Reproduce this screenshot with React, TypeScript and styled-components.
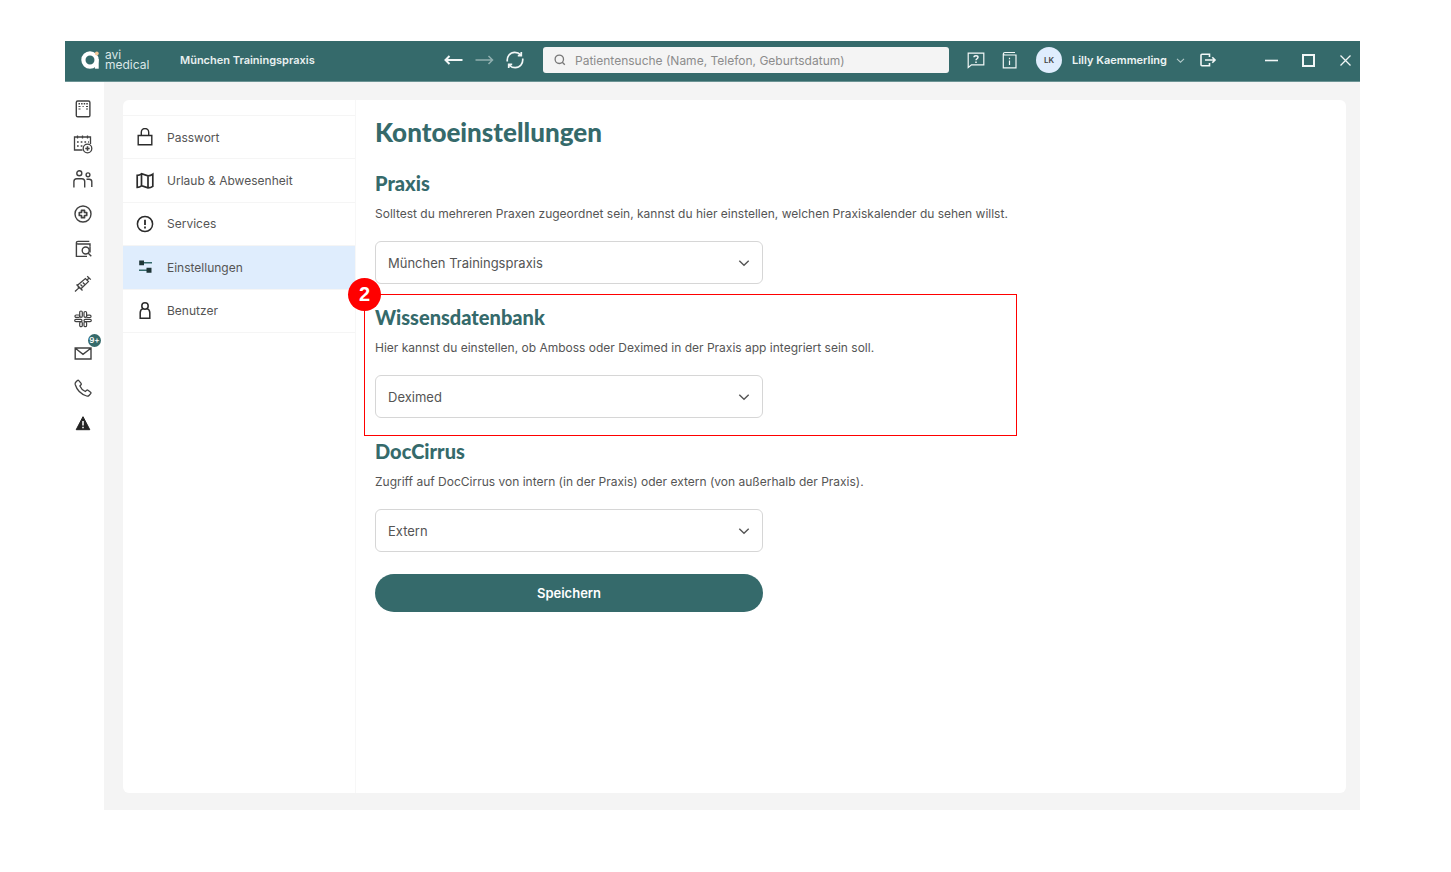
import React, { useState } from 'react';
import styled, { createGlobalStyle } from 'styled-components';

const teal = '#356a6b';
const ink = '#414141';

const GlobalStyle = createGlobalStyle`
  * { box-sizing: border-box; }
  body {
    margin: 0;
    background: #fff;
    color: #555;
    font-family: Inter, 'Liberation Sans', sans-serif;
    font-size: 12px;
  }
  button, input, select { font: inherit; color: inherit; }
  h1, h2, p, ul { margin: 0; padding: 0; }
  ul { list-style: none; }
  svg { display: block; flex: none; fill: none; stroke: currentColor; }
`;

const Page = styled.div`
  padding: 41px 91px 62px 65px;
`;

const AppWindow = styled.div`
  display: flex;
  flex-direction: column;
  min-height: calc(100vh - 103px);
`;

const TopBar = styled.header`
  display: flex;
  align-items: center;
  height: 41px;
  padding-bottom: 2px;
  background: ${teal};
  border-bottom: 1px solid #6b9394;
  color: #fff;
`;

const BrandArea = styled.div`
  display: flex;
  align-items: center;
  width: 379px;
  padding-left: 16px;
  flex: none;
`;

const Brand = styled.a`
  display: flex;
  align-items: center;
  gap: 5px;
  width: 99px;
  color: #dbe7e7;
  text-decoration: none;
`;

const BrandName = styled.span`
  font-size: 12px;
  line-height: 10px;
`;

const PracticeName = styled.strong`
  font-size: 11px;
  font-weight: 600;
  white-space: nowrap;
  color: #e8f0f0;
`;

const IconButton = styled.button<{ $dim?: boolean }>`
  display: flex;
  padding: 0;
  border: 0;
  background: none;
  color: ${(p) => (p.$dim ? '#91b0b0' : '#f2f7f7')};
  cursor: pointer;
`;

const History = styled.div`
  display: flex;
  align-items: center;
  gap: 12px;
  width: 99px;
  flex: none;
`;

const Search = styled.label`
  display: flex;
  align-items: center;
  flex: 1;
  min-width: 160px;
  height: 26px;
  padding: 0 11px;
  gap: 9px;
  border-radius: 3px;
  background: #f4f4f4;
  color: #777;
`;

const SearchInput = styled.input`
  flex: 1;
  min-width: 0;
  padding: 0;
  border: 0;
  outline: 0;
  background: none;
  &::placeholder { color: #8c8c8c; opacity: 1; }
`;

const Tools = styled.div`
  display: flex;
  align-items: center;
  width: 411px;
  padding: 0 8px 0 18px;
  flex: none;
`;

const ToolPair = styled.div`
  display: flex;
  align-items: center;
  gap: 17px;
  width: 69px;
`;

const UserButton = styled.button`
  display: flex;
  align-items: center;
  width: 164px;
  padding: 0;
  border: 0;
  background: none;
  font-size: 11px;
  font-weight: 600;
  white-space: nowrap;
  color: #edf4f4;
  cursor: pointer;
  svg { margin-left: 9px; color: #b4cbcb; }
`;

const Avatar = styled.span`
  display: grid;
  place-items: center;
  width: 26px;
  height: 26px;
  margin-right: 10px;
  border-radius: 50%;
  background: #dfedfd;
  color: #444;
  font-size: 8px;
`;

const WindowControls = styled.div`
  display: flex;
  align-items: center;
  gap: 24px;
  margin-left: auto;
`;

const Body = styled.div`
  display: flex;
  flex: 1;
`;

const Rail = styled.nav`
  display: flex;
  flex-direction: column;
  align-items: center;
  gap: 15px;
  width: 39px;
  padding: 17px 3px 0 0;
  flex: none;
`;

const RailButton = styled.button`
  position: relative;
  display: grid;
  place-items: center;
  width: 20px;
  height: 20px;
  padding: 0;
  border: 0;
  background: none;
  color: ${ink};
  cursor: pointer;
`;

const Count = styled.span`
  position: absolute;
  top: -10px;
  right: -8px;
  width: 13px;
  height: 13px;
  border-radius: 50%;
  background: ${teal};
  color: #fff;
  font-size: 8px;
  font-weight: 600;
  line-height: 13px;
  text-align: center;
`;

const Workspace = styled.div`
  display: flex;
  flex: 1;
  min-width: 0;
  padding: 18px 14px 17px 19px;
  background: #f4f4f4;
`;

const Card = styled.div`
  display: flex;
  flex: 1;
  min-width: 0;
  border-radius: 6px;
  background: #fff;
`;

const SideMenu = styled.nav`
  width: 233px;
  padding-top: 15px;
  border-right: 1px solid #f7f7f7;
  flex: none;
`;

const MenuList = styled.ul`
  display: grid;
  grid-template-rows: repeat(5, 1fr);
  height: 218px;
  border-top: 1px solid #f5f5f5;
`;

const MenuLink = styled.a<{ $active?: boolean }>`
  display: flex;
  align-items: center;
  gap: 13px;
  height: 100%;
  padding-left: 13px;
  border-bottom: 1px solid #f5f5f5;
  background: ${(p) => (p.$active ? '#dfedfd' : 'transparent')};
  font-size: 12px;
  color: #555;
  text-decoration: none;
  svg { color: #2b2b2b; }
`;

const Main = styled.main`
  flex: 1;
  min-width: 0;
  padding: 17px 19px 24px;
`;

const Title = styled.h1`
  margin-bottom: 25px;
  font-family: Lato, sans-serif;
  font-size: 26px;
  font-weight: 900;
  line-height: 30px;
  color: ${teal};
`;

const Section = styled.section`
  position: relative;
  max-width: 642px;
  margin-bottom: 22px;
`;

const SectionTitle = styled.h2`
  margin-bottom: 11px;
  font-family: Lato, sans-serif;
  font-size: 20px;
  font-weight: 900;
  line-height: 22px;
  color: ${teal};
`;

const Hint = styled.p`
  margin-bottom: 18px;
  font-size: 12px;
  line-height: 18px;
`;

const SelectWrap = styled.div`
  display: grid;
  align-items: center;
  max-width: 388px;
  > * { grid-area: 1 / 1; }
  svg { justify-self: end; margin-right: 13px; pointer-events: none; }
`;

const Select = styled.select`
  appearance: none;
  width: 100%;
  height: 43px;
  padding: 0 36px 0 12px;
  border: 1px solid #d6d6d6;
  border-radius: 6px;
  background: #fff;
  font-size: 13px;
`;

const SaveButton = styled.button`
  display: block;
  width: 100%;
  max-width: 388px;
  height: 38px;
  border: 0;
  border-radius: 19px;
  background: ${teal};
  color: #fff;
  font-size: 13px;
  font-weight: 600;
  cursor: pointer;
`;

const Highlight = styled.div`
  position: absolute;
  top: -12px;
  right: 0;
  bottom: -18px;
  left: -11px;
  border: 1px solid #f00;
  pointer-events: none;
`;

const StepBadge = styled.span`
  position: absolute;
  top: -17px;
  left: -17px;
  width: 33px;
  height: 33px;
  border-radius: 50%;
  background: #f00;
  color: #fff;
  font-family: 'Liberation Sans', sans-serif;
  font-size: 20px;
  font-weight: 700;
  line-height: 33px;
  text-align: center;
`;

const Chevron = ({ size = 12 }: { size?: number }) => (
  <svg width={size} height={size} viewBox="0 0 12 12" strokeWidth="1.4">
    <path d="M1.3 3.8 6 8.3l4.7-4.5" />
  </svg>
);

const railItems = [
  { label: 'Kalender', icon: (
    <svg width="20" height="20" viewBox="0 0 20 20" strokeWidth="1.4">
      <rect x="3.300" y="2" width="13.600" height="15.800" rx="1.400" />
      <path d="M5.500 4.800h9.500" strokeDasharray="1.500 1.100" />
      <path d="M5.500 7.500h2M9.500 7.500h1.200M13 7.500h2M5.500 10h2M13 10h2" strokeWidth="1.200" />
    </svg>) },
  { label: 'Termin anlegen', icon: (
    <svg width="20" height="20" viewBox="0 0 20 20" strokeWidth="1.3">
      <path d="M9.500 16h-8V3h16v7" />
      <path d="M4.500 1.500v3M9.500 1.500v3M14.500 1.500v3" />
      <path d="M4 8h12M4 12h6" strokeDasharray="1.700 2" />
      <circle cx="14.500" cy="14.500" r="4.300" fill="#fff" />
      <path d="M14.500 12.300v4.400M12.300 14.500h4.400" strokeWidth="1.600" />
    </svg>) },
  { label: 'Patienten', icon: (
    <svg width="20" height="20" viewBox="0 0 20 20" strokeWidth="1.400">
      <circle cx="6.300" cy="4.200" r="2.500" />
      <path d="M.9 18.500v-6c0-1.800 1-2.800 2.800-2.800h5.200c1.800 0 2.800 1 2.800 2.800v6" />
      <circle cx="15" cy="5.800" r="1.900" />
      <path d="M13.500 10.200h2.600c1.800 0 2.700 1 2.700 2.600v5.200" />
    </svg>) },
  { label: 'Behandlung', icon: (
    <svg width="20" height="20" viewBox="0 0 20 20" strokeWidth="1.400">
      <circle cx="10" cy="10" r="8" />
      <path d="M8.500 6.300h3v2.200h2.200v3h-2.200v2.200h-3v-2.200H6.300v-3h2.200z" strokeWidth="1.700" strokeLinejoin="round" />
    </svg>) },
  { label: 'Akten durchsuchen', icon: (
    <svg width="20" height="20" viewBox="0 0 20 20" strokeWidth="1.400">
      <path d="M16.300 2.400H5c-2.200 0-2.200 2.600 0 2.600h12v2.500M3.400 3.700v13.700H14" />
      <circle cx="12.700" cy="11.500" r="3.500" />
      <path d="m15 14 3.300 3.300M17 13.500V7.500" />
    </svg>) },
  { label: 'Impfungen', icon: (
    <svg width="20" height="20" viewBox="0 0 20 20" strokeWidth="1.300">
      <path d="m2 17.500 3.600-3.400M3.500 10.500l6 6M5.500 13.800 4.800 11l7.600-6.400 3 3-7.200 6.900-2.700-.7ZM13.800 6.200l2.600-2.400M14.200 2.200l3.600 3.400M7.500 10.500l1.800 1.800M9.800 8.500l1.800 1.800" />
    </svg>) },
  { label: 'Slack', icon: (
    <svg width="20" height="20" viewBox="0 0 20 20" strokeWidth="1.200">
      <rect x="6.700" y="2" width="2.600" height="6.300" rx="1.300" />
      <rect x="2" y="6" width="4.700" height="2.300" rx="1.100" />
      <rect x="11" y="2.500" width="2.600" height="5.800" rx="1.300" />
      <rect x="13.600" y="6.200" width="4.400" height="2.300" rx="1.100" />
      <rect x="1.700" y="10.300" width="7.300" height="2.400" rx="1.200" />
      <rect x="11" y="10.300" width="7.300" height="2.400" rx="1.200" />
      <rect x="6.700" y="12.700" width="2.600" height="5" rx="1.300" />
      <rect x="11" y="12.700" width="2.600" height="5" rx="1.300" />
    </svg>) },
  { label: 'Nachrichten', count: '9+', icon: (
    <svg width="20" height="20" viewBox="0 0 20 20" strokeWidth="1.400">
      <path d="M2.200 4h15.800v11H2.200zM2.400 4.300 10 10.300l7.800-6" />
    </svg>) },
  { label: 'Telefon', icon: (
    <svg width="20" height="20" viewBox="0 0 20 20" strokeWidth="1.300">
      <path d="M2.700 3.300 4.400 1.600c.5-.4 1-.4 1.400 0l2.300 2.800c.4.5.3 1-.1 1.400L6.900 7c1 2.400 2.900 4.400 5.400 5.500l1.300-1.200c.4-.4.9-.4 1.400-.1l2.600 2c.5.4.5 1 .1 1.400L16 16.500c-.6.7-1.500.8-2.300.5C8 15.200 3.900 11 2.200 5.500c-.2-.8-.1-1.600.5-2.200Z" />
    </svg>) },
  { label: 'Warnungen', icon: (
    <svg width="20" height="20" viewBox="0 0 20 20" strokeWidth="1">
      <path d="M10 2.700 16.800 15.700H3.200z" fill="#222" stroke="#222" strokeLinejoin="round" />
      <path d="M10 7v4.600M10 12.800v1.500" stroke="#fff" strokeWidth="1.500" />
    </svg>) },
];

const menuItems = [
  { label: 'Passwort', icon: (
    <svg width="18" height="18" viewBox="0 0 18 18" strokeWidth="1.400">
      <path d="M2.200 7.500h13.600v9.300H2.200zM5.300 7.500V4.200a3.700 3.700 0 0 1 7.400 0v3.300" />
    </svg>) },
  { label: 'Urlaub & Abwesenheit', icon: (
    <svg width="18" height="18" viewBox="0 0 18 18" strokeWidth="1.700">
      <path d="M1.200 3.300c1.500 0 3-.5 4.300-1.500l6.500 2c1.500 0 3.300-.4 4.800-1.500v12c-1.500 1.200-3.300 1.600-4.800 1.600l-6.500-2.100c-1.300 1-2.800 1.500-4.300 1.500zM5.500 2v12M12 4v12" />
    </svg>) },
  { label: 'Services', icon: (
    <svg width="18" height="18" viewBox="0 0 18 18" strokeWidth="1.500">
      <circle cx="9" cy="9" r="7.600" />
      <path d="M9 4.800v5.200M9 11.500v2" strokeWidth="1.800" />
    </svg>) },
  { label: 'Einstellungen', icon: (
    <svg width="18" height="18" viewBox="0 0 18 18" strokeWidth="1.400">
      <path d="M7 4.800h9M3 12.200h9" stroke={teal} />
      <path d="M3.200 2.500h4.800v4.800H3.200zM10.500 9.800h5v5h-5z" fill="#1e3536" stroke="none" />
    </svg>) },
  { label: 'Benutzer', icon: (
    <svg width="18" height="18" viewBox="0 0 18 18" strokeWidth="1.500">
      <circle cx="9" cy="4" r="3.200" />
      <path d="M6.900 6.600C5 7.300 4.200 8.700 4.200 10.800v5.400h9.600v-5.400c0-2.100-.8-3.500-2.700-4.200" />
    </svg>) },
];

type SettingProps = {
  id: string;
  title: string;
  hint: string;
  options: string[];
  initial: string;
  step?: number;
};

function Setting({ id, title, hint, options, initial, step }: SettingProps) {
  const [value, setValue] = useState(initial);
  return (
    <Section>
      <SectionTitle><label htmlFor={id}>{title}</label></SectionTitle>
      <Hint>{hint}</Hint>
      <SelectWrap>
        <Select id={id} value={value} onChange={(e) => setValue(e.target.value)}>
          {options.map((o) => <option key={o}>{o}</option>)}
        </Select>
        <Chevron />
      </SelectWrap>
      {step !== undefined && <Highlight><StepBadge>{step}</StepBadge></Highlight>}
    </Section>
  );
}

export default function App() {
  return (
    <Page>
      <GlobalStyle />
      <AppWindow>
        <TopBar>
          <BrandArea>
            <Brand href="#">
              <svg width="19" height="18" viewBox="0 0 19 18">
                <circle cx="9" cy="9" r="6.600" stroke="#fff" strokeWidth="4.200" />
                <path d="M15.800 8v9.700" stroke="#fff" strokeWidth="3.800" />
                <circle cx="15.800" cy="2.500" r="1.900" fill="#f3c99b" stroke="none" />
              </svg>
              <BrandName>avi<br />medical</BrandName>
            </Brand>
            <PracticeName>München Trainingspraxis</PracticeName>
          </BrandArea>
          <History>
            <IconButton aria-label="Zurück">
              <svg width="19" height="16" viewBox="0 0 19 16" strokeWidth="2"><path d="M18.500 8H1.500M5.500 4l-4 4 4 4" /></svg>
            </IconButton>
            <IconButton aria-label="Vorwärts" $dim>
              <svg width="19" height="16" viewBox="0 0 19 16" strokeWidth="1.500"><path d="M.5 8h17M13.500 4l4 4-4 4" /></svg>
            </IconButton>
            <IconButton aria-label="Neu laden">
              <svg width="18" height="18" viewBox="0 0 18 18" strokeWidth="1.700">
                <path d="M1.300 10.500C.7 5.500 4 1.300 8.800 1.300c2.300 0 4.300.8 5.800 2.500M15.300 1v3.700h-3.500M16.700 7.500c.6 5-2.700 9.200-7.500 9.200-2.300 0-4.300-.8-5.800-2.500M2.700 17v-3.700h3.500" />
              </svg>
            </IconButton>
          </History>
          <Search>
            <svg width="12" height="12" viewBox="0 0 12 12" strokeWidth="1.300">
              <circle cx="5.300" cy="5.300" r="4.200" /><path d="m8.300 8.300 2.500 2.500" />
            </svg>
            <SearchInput aria-label="Patientensuche" placeholder="Patientensuche (Name, Telefon, Geburtsdatum)" />
          </Search>
          <Tools>
            <ToolPair>
              <IconButton aria-label="Hilfe">
                <svg width="18" height="18" viewBox="0 0 18 18" strokeWidth="1.200">
                  <path d="M1.200 16.500V2.200h15.600v11.600H4.500z" />
                  <path d="M7 6.300c0-2.200 4-2.200 4 0 0 1.500-2 1.400-2 3M9 10.500V12" strokeWidth="1.500" />
                </svg>
              </IconButton>
              <IconButton aria-label="Information">
                <svg width="15" height="18" viewBox="0 0 15 18" strokeWidth="1.200">
                  <path d="M13 1.500H3C.8 1.500.8 4 3 4h11v12.800H1.300V3M7.500 6.800v1.500M7.500 9.500v4.500" />
                </svg>
              </IconButton>
            </ToolPair>
            <UserButton>
              <Avatar>LK</Avatar>
              Lilly Kaemmerling
              <Chevron size={9} />
            </UserButton>
            <IconButton aria-label="Abmelden">
              <svg width="17" height="14" viewBox="0 0 17 14" strokeWidth="1.600">
                <path d="M9.500 4V1.200H2q-1 0-1 1v9.600q0 1 1 1h7.500V10M5 7h10M12.300 4.300 15 7l-2.700 2.700" />
              </svg>
            </IconButton>
            <WindowControls>
              <IconButton aria-label="Minimieren">
                <svg width="13" height="13" viewBox="0 0 13 13" strokeWidth="1.600"><path d="M0 6.500h13" /></svg>
              </IconButton>
              <IconButton aria-label="Maximieren">
                <svg width="13" height="13" viewBox="0 0 13 13" strokeWidth="2"><path d="M1 1h11v11H1z" /></svg>
              </IconButton>
              <IconButton aria-label="Schließen">
                <svg width="13" height="13" viewBox="0 0 13 13" strokeWidth="1.300"><path d="m1.500 1.500 10 10M11.500 1.500l-10 10" /></svg>
              </IconButton>
            </WindowControls>
          </Tools>
        </TopBar>
        <Body>
          <Rail>
            {railItems.map((item) => (
              <RailButton key={item.label} aria-label={item.label}>
                {item.icon}
                {item.count && <Count>{item.count}</Count>}
              </RailButton>
            ))}
          </Rail>
          <Workspace>
            <Card>
              <SideMenu>
                <MenuList>
                  {menuItems.map((item) => (
                    <li key={item.label}>
                      <MenuLink href="#" $active={item.label === 'Einstellungen'}>
                        {item.icon}
                        {item.label}
                      </MenuLink>
                    </li>
                  ))}
                </MenuList>
              </SideMenu>
              <Main>
                <Title>Kontoeinstellungen</Title>
                <Setting
                  id="praxis"
                  title="Praxis"
                  hint="Solltest du mehreren Praxen zugeordnet sein, kannst du hier einstellen, welchen Praxiskalender du sehen willst."
                  options={['München Trainingspraxis']}
                  initial="München Trainingspraxis"
                />
                <Setting
                  id="wissensdatenbank"
                  title="Wissensdatenbank"
                  hint="Hier kannst du einstellen, ob Amboss oder Deximed in der Praxis app integriert sein soll."
                  options={['Amboss', 'Deximed']}
                  initial="Deximed"
                  step={2}
                />
                <Setting
                  id="doccirrus"
                  title="DocCirrus"
                  hint="Zugriff auf DocCirrus von intern (in der Praxis) oder extern (von außerhalb der Praxis)."
                  options={['Intern', 'Extern']}
                  initial="Extern"
                />
                <SaveButton>Speichern</SaveButton>
              </Main>
            </Card>
          </Workspace>
        </Body>
      </AppWindow>
    </Page>
  );
}
